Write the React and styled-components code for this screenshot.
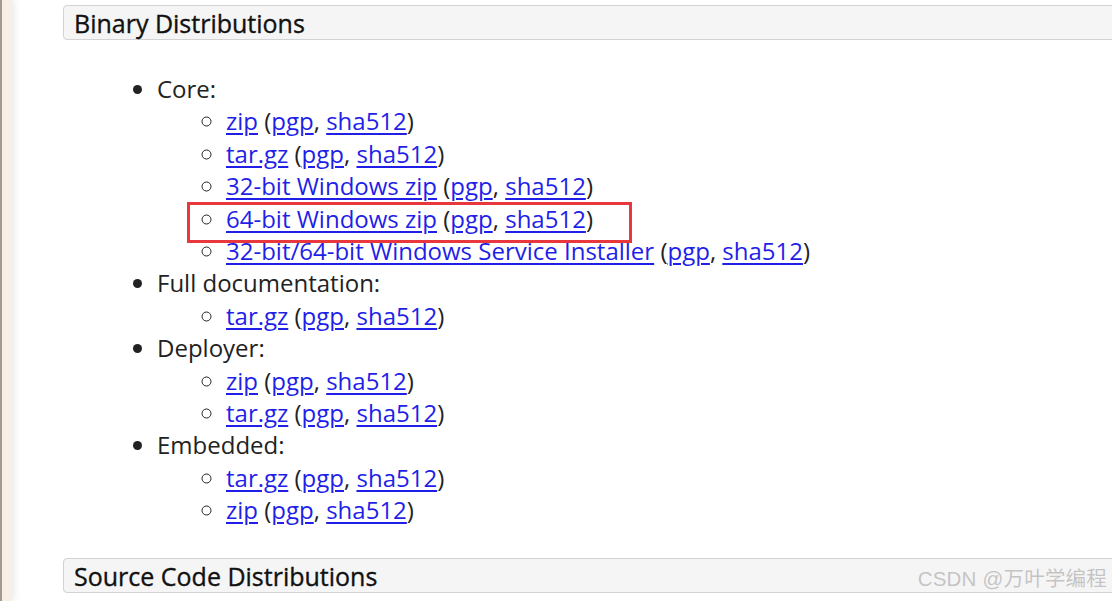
import React from 'react'
import styled, { createGlobalStyle } from 'styled-components'

const GlobalStyle = createGlobalStyle`
  html, body {
    margin: 0;
    padding: 0;
    background: #ffffff;
    overflow: hidden;
  }
  body {
    font-family: "Open Sans", "Noto Sans", "Liberation Sans", sans-serif;
    color: #222;
  }
`

const Page = styled.div`
  position: relative;
  display: flex;
  width: 1112px;
  height: 601px;
  overflow: hidden;
`

const Sidebar = styled.div`
  flex: 0 0 10px;
  background: #f7efe3;
  border-left: 2px solid #a39a8e;
  box-shadow: 3px 0 6px rgba(0, 0, 0, 0.08);
`

const Main = styled.main`
  flex: 1;
  padding: 5px 0 0 51px;
  margin-right: -20px;
`

const SectionTitle = styled.h3`
  margin: 0;
  height: 35px;
  box-sizing: border-box;
  padding: 0 10px;
  border: 1px solid #d2d2d2;
  border-radius: 4px;
  background: #f5f5f5;
  font-size: 25px;
  font-weight: 500;
  line-height: 34px;
  color: #111;
  -webkit-text-stroke: 0.35px #111;
`

const List = styled.ul`
  margin: ${({ nested }) => (nested ? '0' : '33px 0 31px')};
  padding-left: ${({ nested }) => (nested ? '69px' : '94px')};
  list-style-type: ${({ nested }) => (nested ? 'circle' : 'disc')};
  font-size: 24px;
  line-height: 32.4px;
`

const Item = styled.li`
  &::marker {
    color: #222;
  }
`

const Link = styled.a`
  color: #1f1fe8;
  text-decoration: underline;
  text-underline-offset: 3px;
  text-decoration-thickness: 1.5px;
`

const Highlight = styled.div`
  position: absolute;
  left: 187px;
  top: 202px;
  width: 445px;
  height: 41px;
  box-sizing: border-box;
  border: 3px solid #e8383d;
  pointer-events: none;
`

const Watermark = styled.div`
  position: absolute;
  right: 5px;
  bottom: 9px;
  font-family: "Liberation Sans", "Noto Sans CJK SC", sans-serif;
  font-size: 20.5px;
  color: #c4c4c4;
  text-shadow: 0 0 1px rgba(255, 255, 255, 0.8);
  letter-spacing: 0.2px;
`

const sections = [
  {
    label: 'Core:',
    files: ['zip', 'tar.gz', '32-bit Windows zip', '64-bit Windows zip', '32-bit/64-bit Windows Service Installer'],
  },
  { label: 'Full documentation:', files: ['tar.gz'] },
  { label: 'Deployer:', files: ['zip', 'tar.gz'] },
  { label: 'Embedded:', files: ['tar.gz', 'zip'] },
]

function Download({ name }) {
  return (
    <Item>
      <Link href="#">{name}</Link> (<Link href="#">pgp</Link>, <Link href="#">sha512</Link>)
    </Item>
  )
}

export default function App() {
  return (
    <>
      <GlobalStyle />
      <Page>
        <Sidebar />
        <Main>
          <SectionTitle>Binary Distributions</SectionTitle>
          <List>
            {sections.map((s) => (
              <Item key={s.label}>
                {s.label}
                <List nested>
                  {s.files.map((f) => (
                    <Download key={f} name={f} />
                  ))}
                </List>
              </Item>
            ))}
          </List>
          <SectionTitle>Source Code Distributions</SectionTitle>
        </Main>
        <Highlight />
        <Watermark>CSDN @万叶学编程</Watermark>
      </Page>
    </>
  )
}
